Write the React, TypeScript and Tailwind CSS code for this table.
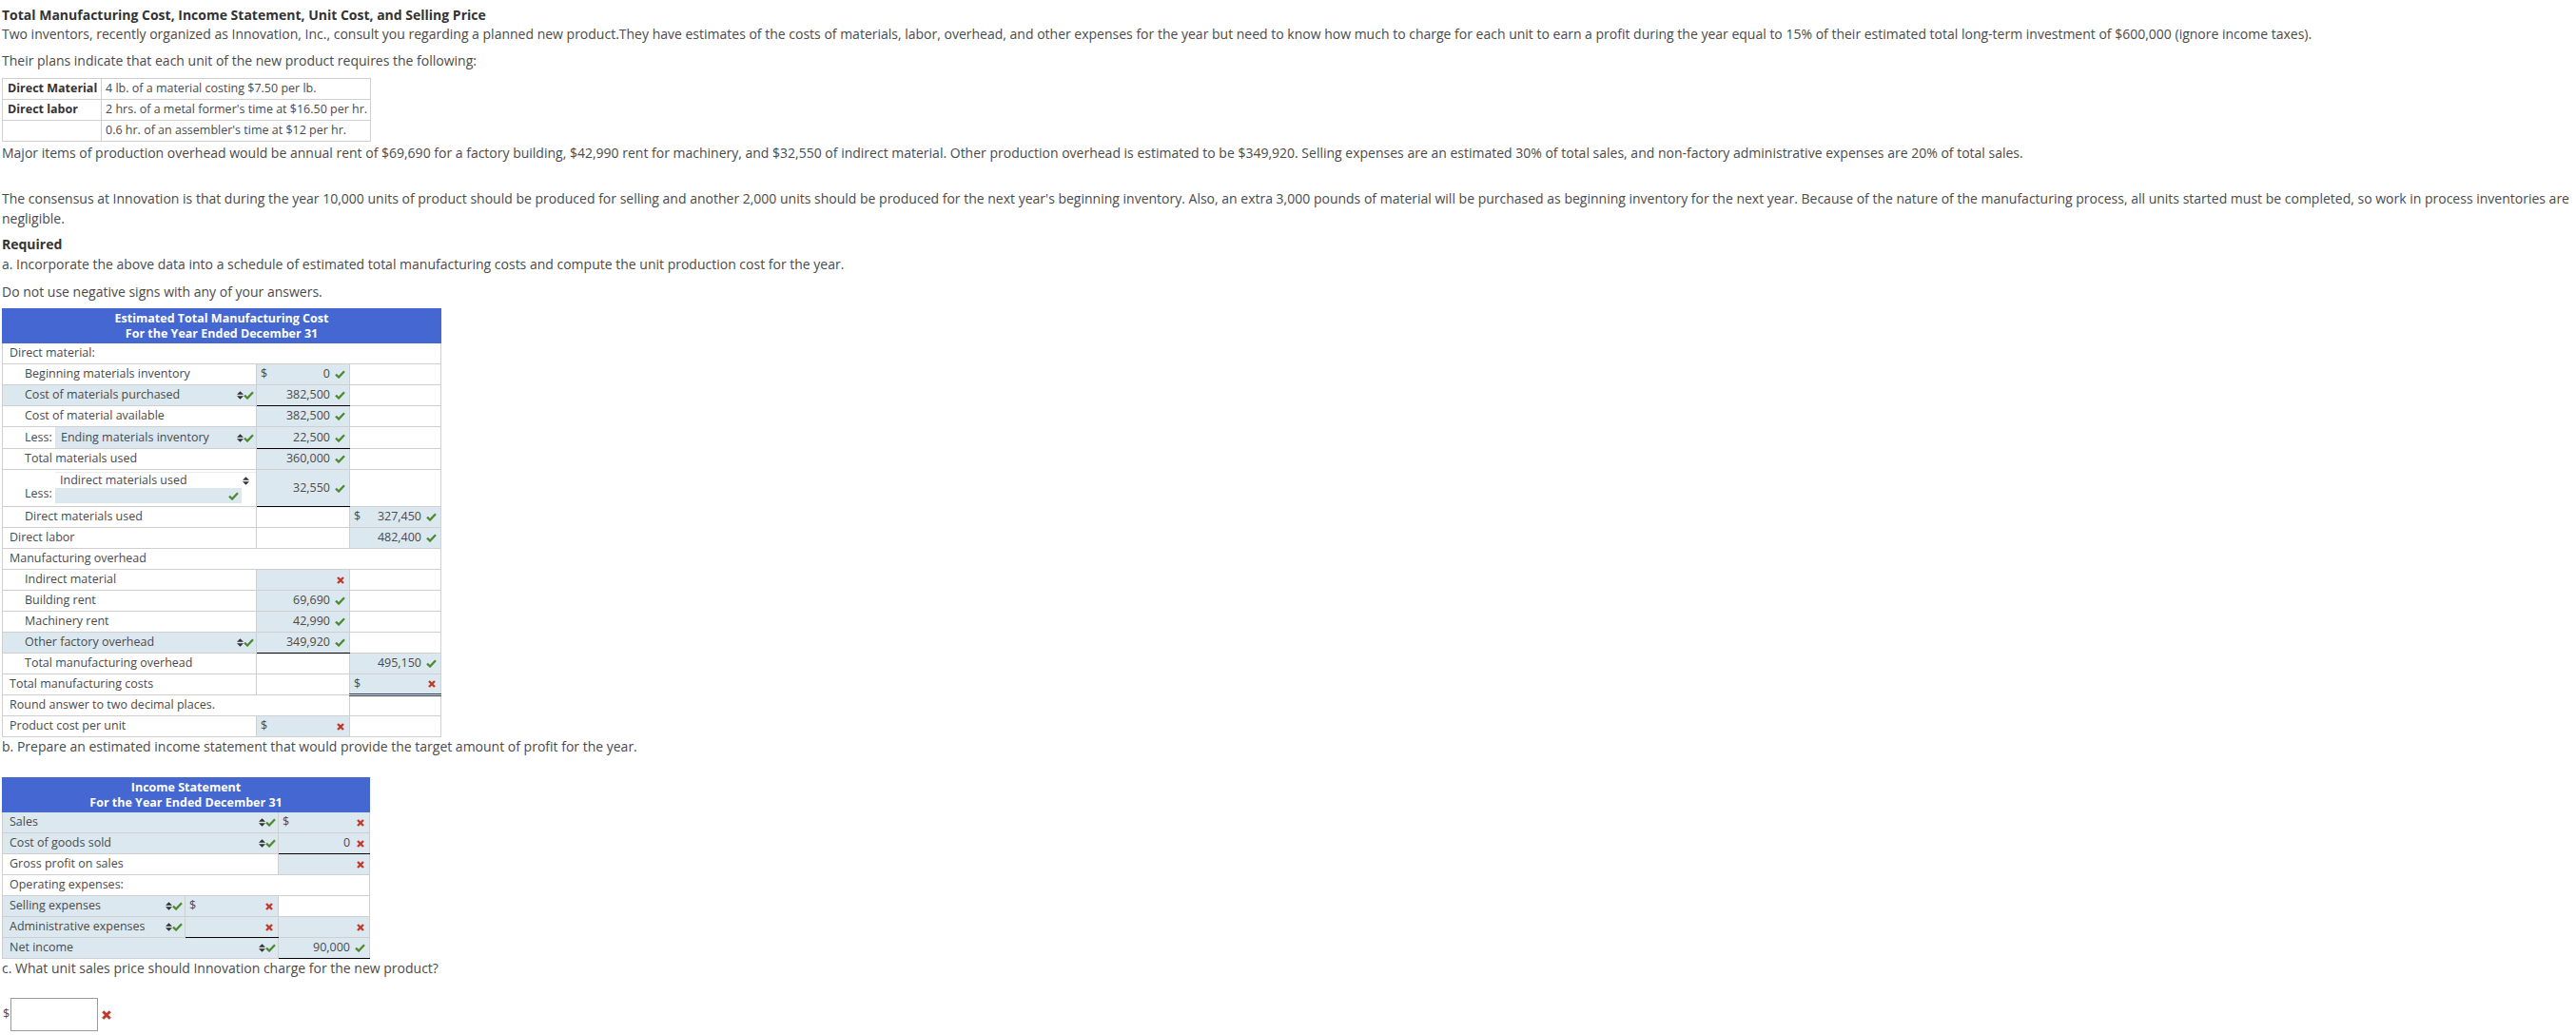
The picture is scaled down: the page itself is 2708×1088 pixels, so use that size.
import React from "react";

const cell = "border border-[#cfcfcf] h-[22px] p-0 align-middle";
const blue = "bg-[#dce8f0]";

function Check() {
    return (
        <svg width="11" height="9" viewBox="0 0 11 9" className="shrink-0">
            <path
                d="M1 4.6 L4.1 7.5 L10 1.3"
                fill="none"
                stroke="#4d8a2e"
                strokeWidth="2.3"
            />
        </svg>
    );
}

function Cross({ size = 8 }: { size?: number }) {
    return (
        <svg width={size} height={size} viewBox="0 0 8 8" className="shrink-0">
            <path
                d="M1 1 L7 7 M7 1 L1 7"
                stroke="#c0392b"
                strokeWidth="2.4"
            />
        </svg>
    );
}

function Arrows() {
    return (
        <svg width="7" height="9" viewBox="0 0 7 9" className="shrink-0">
            <path d="M0 3.7 L3.5 0.3 L7 3.7Z M0 5.3 L7 5.3 L3.5 8.7Z" fill="#333" />
        </svg>
    );
}

type Mark = "ok" | "bad";

// a value cell: optional $, right aligned number, then the grading mark
function Amt({ v, dollar, mark }: { v?: string; dollar?: boolean; mark?: Mark }) {
    return (
        <div className="flex h-full items-center pr-[4px]">
            {dollar && <span className="pl-[4px]">$</span>}
            <span className="ml-auto">{v}</span>
            {mark && (
                <span className="ml-[5px] flex w-[11px] justify-center">
                    {mark === "ok" ? <Check /> : <Cross />}
                </span>
            )}
        </div>
    );
}

// a dropdown label cell (already answered)
function Pick({ text, indent }: { text: string; indent?: boolean }) {
    return (
        <div className="flex h-full items-center pr-[2px]">
            <span className={indent ? "pl-[23px]" : "pl-[7px]"}>{text}</span>
            <span className="ml-auto flex items-center">
                <Arrows />
                <Check />
            </span>
        </div>
    );
}

function Label({ text, indent }: { text: string; indent?: boolean }) {
    return <span className={indent ? "pl-[23px]" : "pl-[7px]"}>{text}</span>;
}

export default function App() {
    return (
        <div className="min-h-screen w-[2708px] bg-white pl-[2px] font-['Open_Sans',sans-serif] text-[14px] text-[#4a4a4a]">
            <h1 className="pt-[6px] text-[14px] leading-[20px] font-bold text-[#333]">
                Total Manufacturing Cost, Income Statement, Unit Cost, and Selling Price
            </h1>
            <p className="leading-[20px]">
                Two inventors, recently organized as Innovation, Inc., consult you regarding a planned new product.They have estimates of the costs of materials, labor, overhead, and other expenses for the year but need to know how much to charge for each unit to earn a profit during the year equal to 15% of their estimated total long-term investment of $600,000 (ignore income taxes).
            </p>
            <p className="mt-[9px] leading-[18px]">
                Their plans indicate that each unit of the new product requires the following:
            </p>

            <table className="mt-[9px] w-[388px] table-fixed border-collapse text-[12.5px]">
                <colgroup>
                    <col className="w-[104px]" />
                    <col />
                </colgroup>
                <tbody>
                    <tr>
                        <td className={`${cell} pl-[5px] font-bold whitespace-nowrap text-[#333]`}>Direct Material</td>
                        <td className={`${cell} pl-[4px] whitespace-nowrap`}>4 lb. of a material costing $7.50 per lb.</td>
                    </tr>
                    <tr>
                        <td className={`${cell} pl-[5px] font-bold whitespace-nowrap text-[#333]`}>Direct labor</td>
                        <td className={`${cell} pl-[4px] whitespace-nowrap`}>2 hrs. of a metal former's time at $16.50 per hr.</td>
                    </tr>
                    <tr>
                        <td className={cell}></td>
                        <td className={`${cell} pl-[4px] whitespace-nowrap`}>0.6 hr. of an assembler's time at $12 per hr.</td>
                    </tr>
                </tbody>
            </table>

            <p className="mt-[3px] leading-[18px]">
                Major items of production overhead would be annual rent of $69,690 for a factory building, $42,990 rent for machinery, and $32,550 of indirect material. Other production overhead is estimated to be $349,920. Selling expenses are an estimated 30% of total sales, and non-factory administrative expenses are 20% of total sales.
            </p>

            <p className="mt-[28px] leading-[21px]">
                The consensus at Innovation is that during the year 10,000 units of product should be produced for selling and another 2,000 units should be produced for the next year's beginning inventory. Also, an extra 3,000 pounds of material will be purchased as beginning inventory for the next year. Because of the nature of the manufacturing process, all units started must be completed, so work in process inventories are negligible.
            </p>
            <p className="mt-[6px] leading-[21px] font-bold text-[#333]">Required</p>
            <p className="leading-[21px]">
                a. Incorporate the above data into a schedule of estimated total manufacturing costs and compute the unit production cost for the year.
            </p>
            <p className="mt-[8px] leading-[21px]">Do not use negative signs with any of your answers.</p>

            <table className="mt-[7px] w-[461px] table-fixed border-collapse text-[12.5px]">
                <colgroup>
                    <col className="w-[267px]" />
                    <col className="w-[98px]" />
                    <col className="w-[96px]" />
                </colgroup>
                <thead>
                    <tr>
                        <th
                            colSpan={3}
                            className="h-[36px] border border-[#4467d1] bg-[#4467d1] p-0 text-center leading-[16px] font-bold text-white"
                        >
                            Estimated Total Manufacturing Cost
                            <br />
                            For the Year Ended December 31
                        </th>
                    </tr>
                </thead>
                <tbody>
                    <tr>
                        <td colSpan={3} className={cell}><Label text="Direct material:" /></td>
                    </tr>
                    <tr>
                        <td className={cell}><Label text="Beginning materials inventory" indent /></td>
                        <td className={`${cell} ${blue}`}><Amt dollar v="0" mark="ok" /></td>
                        <td className={cell}></td>
                    </tr>
                    <tr>
                        <td className={`${cell} ${blue}`}><Pick text="Cost of materials purchased" indent /></td>
                        <td className={`${cell} ${blue} border-b-black`}><Amt v="382,500" mark="ok" /></td>
                        <td className={cell}></td>
                    </tr>
                    <tr>
                        <td className={cell}><Label text="Cost of material available" indent /></td>
                        <td className={`${cell} ${blue}`}><Amt v="382,500" mark="ok" /></td>
                        <td className={cell}></td>
                    </tr>
                    <tr>
                        <td className={cell}>
                            <div className="flex h-[22px] items-center">
                                <span className="w-[55px] shrink-0 pl-[23px]">Less:</span>
                                <div className={`flex h-full flex-1 items-center border-l border-[#e4e4e4] pr-[2px] pl-[5px] ${blue}`}>
                                    <span>Ending materials inventory</span>
                                    <span className="ml-auto flex items-center">
                                        <Arrows />
                                        <Check />
                                    </span>
                                </div>
                            </div>
                        </td>
                        <td className={`${cell} ${blue} border-b-black`}><Amt v="22,500" mark="ok" /></td>
                        <td className={cell}></td>
                    </tr>
                    <tr>
                        <td className={cell}><Label text="Total materials used" indent /></td>
                        <td className={`${cell} ${blue}`}><Amt v="360,000" mark="ok" /></td>
                        <td className={cell}></td>
                    </tr>
                    <tr>
                        <td className={cell}>
                            <div className="flex h-[38px]">
                                <span className="flex w-[55px] shrink-0 items-end pb-[3px] pl-[23px]">Less:</span>
                                <div className="flex flex-1 flex-col pt-[2px] pb-[3px]">
                                    <div className="flex h-[17px] items-center border-t border-[#ececec] bg-white pr-[7px] pl-[5px]">
                                        <span>Indirect materials used</span>
                                        <span className="ml-auto"><Arrows /></span>
                                    </div>
                                    <div className="flex flex-1">
                                        <div className={`flex w-[196px] items-center justify-end pr-[3px] ${blue}`}>
                                            <Check />
                                        </div>
                                    </div>
                                </div>
                            </div>
                        </td>
                        <td className={`${cell} ${blue} border-b-black align-bottom`}>
                            <div className="h-[22px]"><Amt v="32,550" mark="ok" /></div>
                        </td>
                        <td className={cell}></td>
                    </tr>
                    <tr>
                        <td className={cell}><Label text="Direct materials used" indent /></td>
                        <td className={cell}></td>
                        <td className={`${cell} ${blue}`}><Amt dollar v="327,450" mark="ok" /></td>
                    </tr>
                    <tr>
                        <td className={cell}><Label text="Direct labor" /></td>
                        <td className={cell}></td>
                        <td className={`${cell} ${blue}`}><Amt v="482,400" mark="ok" /></td>
                    </tr>
                    <tr>
                        <td colSpan={3} className={cell}><Label text="Manufacturing overhead" /></td>
                    </tr>
                    <tr>
                        <td className={cell}><Label text="Indirect material" indent /></td>
                        <td className={`${cell} ${blue}`}><Amt mark="bad" /></td>
                        <td className={cell}></td>
                    </tr>
                    <tr>
                        <td className={cell}><Label text="Building rent" indent /></td>
                        <td className={`${cell} ${blue}`}><Amt v="69,690" mark="ok" /></td>
                        <td className={cell}></td>
                    </tr>
                    <tr>
                        <td className={cell}><Label text="Machinery rent" indent /></td>
                        <td className={`${cell} ${blue}`}><Amt v="42,990" mark="ok" /></td>
                        <td className={cell}></td>
                    </tr>
                    <tr>
                        <td className={`${cell} ${blue}`}><Pick text="Other factory overhead" indent /></td>
                        <td className={`${cell} ${blue} border-b-black`}><Amt v="349,920" mark="ok" /></td>
                        <td className={cell}></td>
                    </tr>
                    <tr>
                        <td className={cell}><Label text="Total manufacturing overhead" indent /></td>
                        <td className={cell}></td>
                        <td className={`${cell} ${blue} border-b-black`}><Amt v="495,150" mark="ok" /></td>
                    </tr>
                    <tr>
                        <td className={cell}><Label text="Total manufacturing costs" /></td>
                        <td className={cell}></td>
                        <td className={`${cell} ${blue} border-b-[3px] border-b-[#2f3a4a] border-double`}>
                            <Amt dollar mark="bad" />
                        </td>
                    </tr>
                    <tr>
                        <td colSpan={2} className={cell}><Label text="Round answer to two decimal places." /></td>
                        <td className={cell}></td>
                    </tr>
                    <tr>
                        <td className={cell}><Label text="Product cost per unit" /></td>
                        <td className={`${cell} ${blue}`}><Amt dollar mark="bad" /></td>
                        <td className={cell}></td>
                    </tr>
                </tbody>
            </table>

            <p className="leading-[20px]">
                b. Prepare an estimated income statement that would provide the target amount of profit for the year.
            </p>

            <table className="mt-[22px] w-[386px] table-fixed border-collapse text-[12.5px]">
                <colgroup>
                    <col className="w-[192px]" />
                    <col className="w-[98px]" />
                    <col className="w-[96px]" />
                </colgroup>
                <thead>
                    <tr>
                        <th
                            colSpan={3}
                            className="h-[36px] border border-[#4467d1] bg-[#4467d1] p-0 text-center leading-[16px] font-bold text-white"
                        >
                            Income Statement
                            <br />
                            For the Year Ended December 31
                        </th>
                    </tr>
                </thead>
                <tbody>
                    <tr>
                        <td colSpan={2} className={`${cell} ${blue}`}><Pick text="Sales" /></td>
                        <td className={`${cell} ${blue}`}><Amt dollar mark="bad" /></td>
                    </tr>
                    <tr>
                        <td colSpan={2} className={`${cell} ${blue}`}><Pick text="Cost of goods sold" /></td>
                        <td className={`${cell} ${blue} border-b-black`}><Amt v="0" mark="bad" /></td>
                    </tr>
                    <tr>
                        <td colSpan={2} className={cell}><Label text="Gross profit on sales" /></td>
                        <td className={`${cell} ${blue}`}><Amt mark="bad" /></td>
                    </tr>
                    <tr>
                        <td colSpan={3} className={cell}><Label text="Operating expenses:" /></td>
                    </tr>
                    <tr>
                        <td className={`${cell} ${blue}`}><Pick text="Selling expenses" /></td>
                        <td className={`${cell} ${blue}`}><Amt dollar mark="bad" /></td>
                        <td className={cell}></td>
                    </tr>
                    <tr>
                        <td className={`${cell} ${blue}`}><Pick text="Administrative expenses" /></td>
                        <td className={`${cell} ${blue} border-b-black`}><Amt mark="bad" /></td>
                        <td className={`${cell} ${blue}`}><Amt mark="bad" /></td>
                    </tr>
                    <tr>
                        <td colSpan={2} className={`${cell} ${blue}`}><Pick text="Net income" /></td>
                        <td className={`${cell} ${blue} border-b-black`}><Amt v="90,000" mark="ok" /></td>
                    </tr>
                </tbody>
            </table>

            <p className="leading-[20px]">c. What unit sales price should Innovation charge for the new product?</p>

            <div className="mt-[21px] flex items-center">
                <span className="pl-[1px] text-[12.5px]">$</span>
                <div className="ml-[1px] h-[35px] w-[92px] border border-[#9a9a9a] bg-white" />
                <span className="ml-[4px]"><Cross size={10} /></span>
            </div>
        </div>
    );
}
